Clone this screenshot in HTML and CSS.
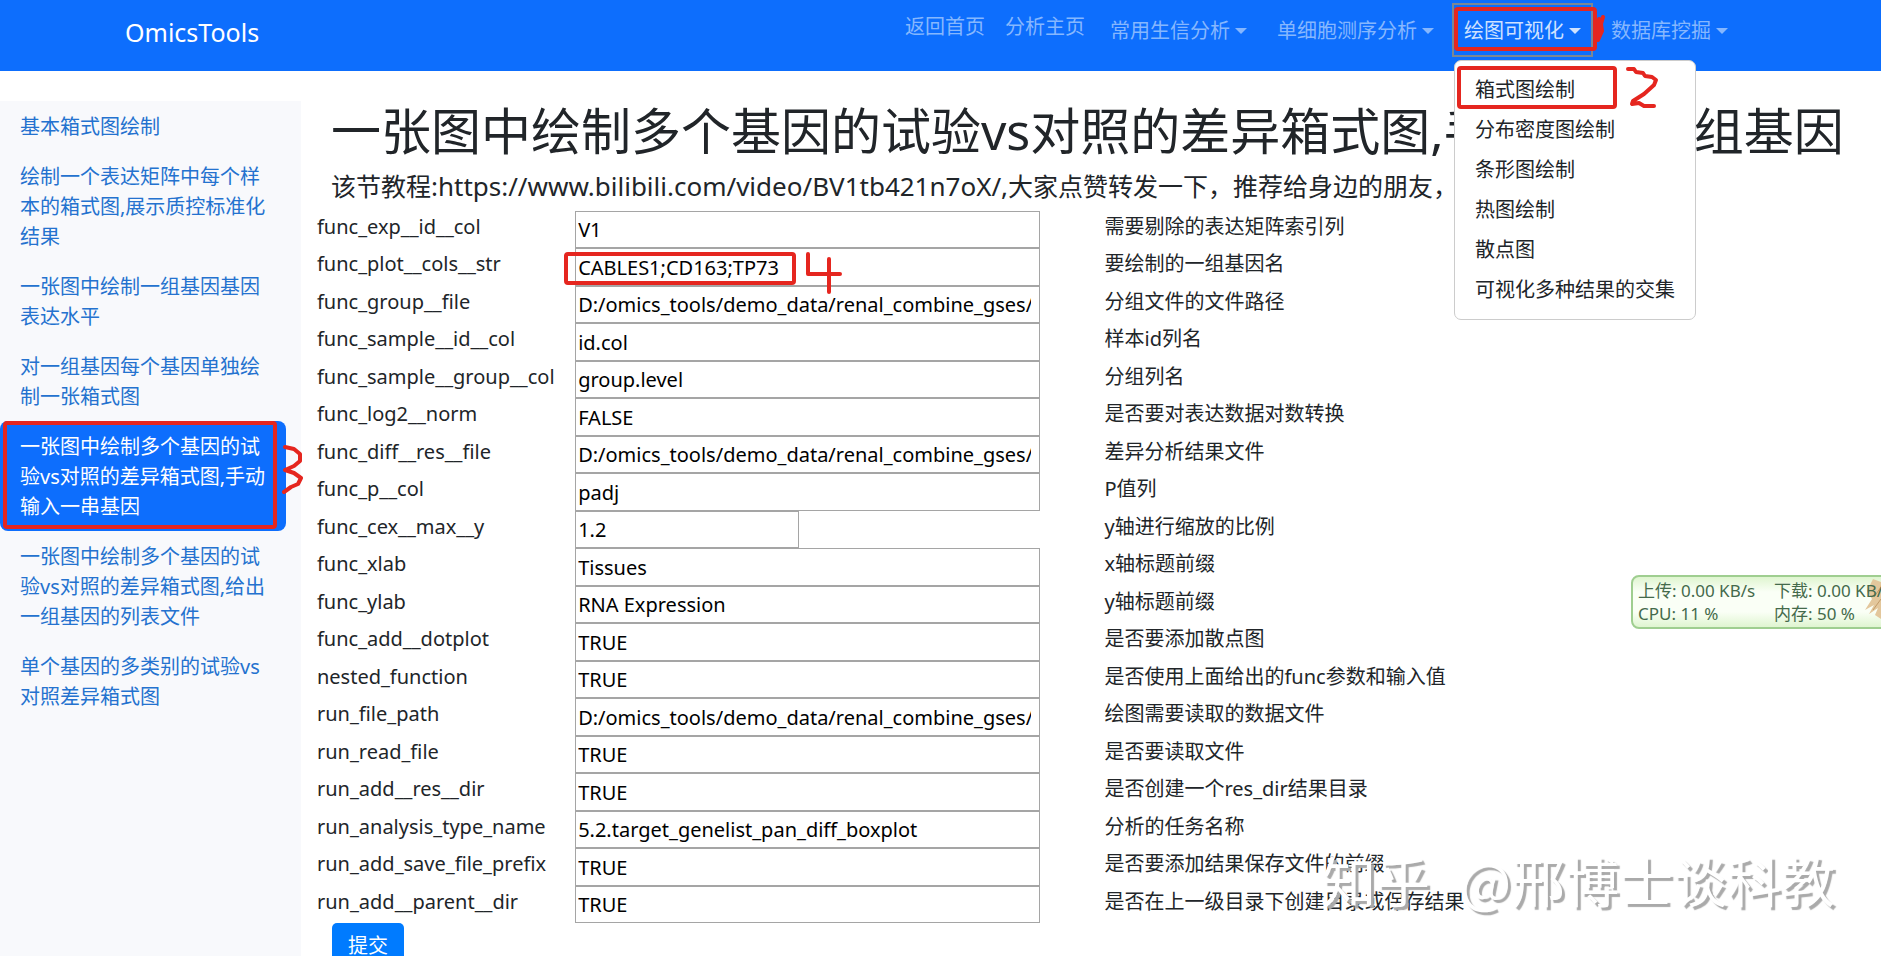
FILE: index.html
```html
<!DOCTYPE html>
<html lang="zh-CN">
<head>
    <meta charset="UTF-8">
    <meta name="viewport" content="width=device-width, initial-scale=1.0">
    <title>OmicsTools</title>
    <link rel="stylesheet" href="styles.css">
</head>
<body>

    <header class="topbar">
        <div class="topbar-inner">
            <a class="brand" href="#">OmicsTools</a>
            <nav class="topnav">
                <a class="nav-link" href="#">返回首页</a>
                <a class="nav-link" href="#">分析主页</a>
                <div class="dropdown"><button class="dropdown-toggle" type="button">常用生信分析</button></div>
                <div class="dropdown"><button class="dropdown-toggle" type="button">单细胞测序分析</button></div>
                <div class="dropdown">
                    <button class="dropdown-toggle open" type="button">绘图可视化</button>
                    <div class="mark mark-1"></div>
                    <svg class="digit digit-1" width="12" height="28" viewBox="0 0 12 28"><path d="M8 2 L6 9 L7 16 L3 25 L4 4"/></svg>
                    <div class="dropdown-menu">
                        <a href="#">箱式图绘制</a>
                        <a href="#">分布密度图绘制</a>
                        <a href="#">条形图绘制</a>
                        <a href="#">热图绘制</a>
                        <a href="#">散点图</a>
                        <a href="#">可视化多种结果的交集</a>
                        <div class="mark mark-2"></div>
                        <svg class="digit digit-2" width="34" height="44" viewBox="0 0 34 44"><path d="M3 4 L9 4 L11 7 L18 8 L20 11 L27 12 L31 15 L29 20 L19 29 L8 36 L7 39 L14 38 L19 41 L29 41"/></svg>
                    </div>
                </div>
                <div class="dropdown"><button class="dropdown-toggle" type="button">数据库挖掘</button></div>
            </nav>
        </div>
    </header>

    <div class="page">
        <aside class="sidebar">
            <a href="#">基本箱式图绘制</a>
            <a href="#">绘制一个表达矩阵中每个样本的箱式图,展示质控标准化结果</a>
            <a href="#">一张图中绘制一组基因基因表达水平</a>
            <a href="#">对一组基因每个基因单独绘制一张箱式图</a>
            <a class="active" href="#">一张图中绘制多个基因的试验vs对照的差异箱式图,手动输入一串基因
                <span class="mark mark-3"></span>
                <svg class="digit digit-3" width="24" height="52" viewBox="0 0 24 52"><path d="M3 3 L12 5 L18 10 L18 17 L12 22 L3 26 L12 29 L19 34 L16 40 L9 43 L2 48"/></svg>
            </a>
            <a href="#">一张图中绘制多个基因的试验vs对照的差异箱式图,给出一组基因的列表文件</a>
            <a href="#">单个基因的多类别的试验vs对照差异箱式图</a>
        </aside>

        <main class="content">
            <h1>一张图中绘制多个基因的试验vs对照的差异箱式图,手动输入一组基因</h1>
            <h5>该节教程<span class="url">:https://www.bilibili.com/video/BV1tb421n7oX/,</span>大家点赞转发一下，推荐给身边的朋友，谢谢</h5>

            <form class="params">
                <div class="row">
                    <label for="p1">func_exp__id__col</label>
                    <div class="field"><input id="p1" type="text" value="V1"></div>
                    <span class="desc">需要剔除的表达矩阵索引列</span>
                </div>
                <div class="row">
                    <label for="p2">func_plot__cols__str</label>
                    <div class="field">
                        <input id="p2" type="text" value="CABLES1;CD163;TP73">
                        <div class="mark mark-4"></div>
                        <svg class="digit digit-4" width="40" height="44" viewBox="0 0 40 44"><path d="M5 4 L5 24 L37 24 M26 9 L26 42"/></svg>
                    </div>
                    <span class="desc">要绘制的一组基因名</span>
                </div>
                <div class="row">
                    <label for="p3">func_group__file</label>
                    <div class="field"><input id="p3" type="text" value="D:/omics_tools/demo_data/renal_combine_gses/group.csv"></div>
                    <span class="desc">分组文件的文件路径</span>
                </div>
                <div class="row">
                    <label for="p4">func_sample__id__col</label>
                    <div class="field"><input id="p4" type="text" value="id.col"></div>
                    <span class="desc">样本id列名</span>
                </div>
                <div class="row">
                    <label for="p5">func_sample__group__col</label>
                    <div class="field"><input id="p5" type="text" value="group.level"></div>
                    <span class="desc">分组列名</span>
                </div>
                <div class="row">
                    <label for="p6">func_log2__norm</label>
                    <div class="field"><input id="p6" type="text" value="FALSE"></div>
                    <span class="desc">是否要对表达数据对数转换</span>
                </div>
                <div class="row">
                    <label for="p7">func_diff__res__file</label>
                    <div class="field"><input id="p7" type="text" value="D:/omics_tools/demo_data/renal_combine_gses/diff.csv"></div>
                    <span class="desc">差异分析结果文件</span>
                </div>
                <div class="row">
                    <label for="p8">func_p__col</label>
                    <div class="field"><input id="p8" type="text" value="padj"></div>
                    <span class="desc">P值列</span>
                </div>
                <div class="row">
                    <label for="p9">func_cex__max__y</label>
                    <div class="field"><input id="p9" class="short" type="number" step="0.1" value="1.2"></div>
                    <span class="desc">y轴进行缩放的比例</span>
                </div>
                <div class="row">
                    <label for="p10">func_xlab</label>
                    <div class="field"><input id="p10" type="text" value="Tissues"></div>
                    <span class="desc">x轴标题前缀</span>
                </div>
                <div class="row">
                    <label for="p11">func_ylab</label>
                    <div class="field"><input id="p11" type="text" value="RNA Expression"></div>
                    <span class="desc">y轴标题前缀</span>
                </div>
                <div class="row">
                    <label for="p12">func_add__dotplot</label>
                    <div class="field"><input id="p12" type="text" value="TRUE"></div>
                    <span class="desc">是否要添加散点图</span>
                </div>
                <div class="row">
                    <label for="p13">nested_function</label>
                    <div class="field"><input id="p13" type="text" value="TRUE"></div>
                    <span class="desc">是否使用上面给出的func参数和输入值</span>
                </div>
                <div class="row">
                    <label for="p14">run_file_path</label>
                    <div class="field"><input id="p14" type="text" value="D:/omics_tools/demo_data/renal_combine_gses/exp.csv"></div>
                    <span class="desc">绘图需要读取的数据文件</span>
                </div>
                <div class="row">
                    <label for="p15">run_read_file</label>
                    <div class="field"><input id="p15" type="text" value="TRUE"></div>
                    <span class="desc">是否要读取文件</span>
                </div>
                <div class="row">
                    <label for="p16">run_add__res__dir</label>
                    <div class="field"><input id="p16" type="text" value="TRUE"></div>
                    <span class="desc">是否创建一个res_dir结果目录</span>
                </div>
                <div class="row">
                    <label for="p17">run_analysis_type_name</label>
                    <div class="field"><input id="p17" type="text" value="5.2.target_genelist_pan_diff_boxplot"></div>
                    <span class="desc">分析的任务名称</span>
                </div>
                <div class="row">
                    <label for="p18">run_add_save_file_prefix</label>
                    <div class="field"><input id="p18" type="text" value="TRUE"></div>
                    <span class="desc">是否要添加结果保存文件的前缀</span>
                </div>
                <div class="row">
                    <label for="p19">run_add__parent__dir</label>
                    <div class="field"><input id="p19" type="text" value="TRUE"></div>
                    <span class="desc">是否在上一级目录下创建目录或保存结果</span>
                </div>
                <button class="submit-btn" type="submit">提交</button>
            </form>
        </main>
    </div>

    <!-- floating system monitor -->
    <div class="monitor">
        <svg class="monitor-hair" width="16" height="44" viewBox="0 0 16 44"><path d="M8 0 L16 3 V40 L10 36 L13 29 L4 35 L9 26 L0 31 L7 20 L2 12 Z" fill="#e3c79c"/><path d="M16 8 L9 18 M16 20 L8 31" stroke="#c19a68" fill="none"/></svg>
        <span>上传: 0.00 KB/s</span><span>下载: 0.00 KB/s</span>
        <span>CPU: 11 %</span><span>内存: 50 %</span>
    </div>

    <div class="watermark"><span>知乎</span><span>@邢博士谈科教</span></div>

</body>
</html>
```
FILE: styles.css
```css
* {
    margin: 0;
    padding: 0;
    box-sizing: border-box;
}

html {
    height: 100%;
}

body {
    position: relative;
    height: 100vh;
    overflow: hidden;
    display: flex;
    flex-direction: column;
    gap: 30px;
    font-family: "Noto Sans", "Noto Sans CJK SC", sans-serif;
    font-size: 20px;
    line-height: 30px;
    color: #212529;
    background: #fff;
}

a {
    text-decoration: none;
}

button, input {
    font: inherit;
}

/* top bar */
.topbar {
    flex: none;
    height: 71px;
    background: #0d6efd;
}

.topbar-inner {
    max-width: 1631px;
    margin: 0 auto;
    display: flex;
    justify-content: space-between;
}

.brand {
    padding-top: 17px;
    font-size: 25px;
    color: #fff;
}

.topnav {
    display: flex;
    align-items: flex-start;
    padding: 5px 18px 0 0;
}

.nav-link {
    padding: 7px 10px;
    color: #86b7fe;
}

.dropdown {
    position: relative;
    margin-left: 10px;
}

.nav-link + .dropdown {
    margin-left: 5px;
}

.dropdown-toggle {
    display: flex;
    align-items: center;
    gap: 5px;
    padding: 11px 10px 9px;
    border: none;
    background: none;
    color: #86b7fe;
    cursor: pointer;
}

.dropdown-toggle::after {
    content: "";
    border-top: 6px solid;
    border-left: 6px solid transparent;
    border-right: 6px solid transparent;
}

.dropdown-toggle.open {
    color: #cfe2ff;
    outline: 2px solid #7c8794;
}

.dropdown-menu {
    position: absolute;
    top: 55px;
    left: 0;
    z-index: 5;
    padding: 9px 0;
    border: 1px solid #ccc;
    border-radius: 7px;
    background: #fff;
}

.dropdown-menu a {
    display: block;
    padding: 5px 20px;
    white-space: nowrap;
    color: #212529;
}

/* layout */
.page {
    flex: 1;
    min-height: 0;
    display: flex;
}

.sidebar {
    flex: none;
    width: 16%;
    padding-right: 15px;
    background: #f8f9fc;
}

.sidebar a {
    position: relative;
    display: block;
    padding: 11px 20px 9px;
    color: #2472cf;
}

.sidebar a.active {
    border-radius: 8px;
    background: #0d6efd;
    color: #fff;
}

.content {
    flex: 1;
    min-width: 0;
    padding: 0 15px 0 16px;
}

.content h1, .content h5 {
    margin-bottom: 10px;
    padding-left: 14px;
    font-weight: 400;
    white-space: nowrap;
}

.content h1 {
    font-size: 50px;
    line-height: 60px;
}

.content h5 {
    height: 30px;
    font-size: 25px;
    line-height: 30px;
}

.url {
    font-size: 26px;
}

/* parameter form */
.row {
    display: grid;
    grid-template-columns: 2fr 4fr 6fr;
    height: 37px;
}

.row:nth-child(even) {
    height: 38px;
}

.row label, .desc {
    padding-top: 1px;
}

.field {
    position: relative;
}

.field input {
    display: block;
    width: 90%;
    height: 100%;
    padding: 0 8px 0 2px;
    border: 1px solid #a5a5a5;
    background: #fff;
    color: #000;
}

.field input.short {
    width: 224px;
    appearance: textfield;
}

.desc {
    padding-left: 13px;
}

.submit-btn {
    margin-left: 15px;
    padding: 8px 16px;
    border: none;
    border-radius: 5px;
    background: #007bff;
    color: #fff;
    cursor: pointer;
}

/* red step marks */
.mark {
    position: absolute;
    z-index: 6;
    border: 4px solid #e5261f;
    border-radius: 4px;
    pointer-events: none;
}

.mark-1 {
    top: 2px;
    left: 0;
    width: 143px;
    height: 44px;
}

.mark-2 {
    top: 5px;
    left: 2px;
    width: 160px;
    height: 43px;
}

.mark-3 {
    top: 0;
    left: 3px;
    width: 274px;
    height: 108px;
}

.mark-4 {
    top: 4px;
    left: -11px;
    width: 232px;
    height: 33px;
}

.digit {
    position: absolute;
    z-index: 6;
    fill: none;
    stroke: #e5261f;
    stroke-width: 4;
    stroke-linecap: round;
    stroke-linejoin: round;
}

.digit-1 {
    top: 10px;
    left: 141px;
}

.digit-2 {
    top: 4px;
    left: 170px;
}

.digit-3 {
    top: 23px;
    left: 282px;
}

.digit-4 {
    top: 2px;
    left: 228px;
}

/* system monitor */
.monitor {
    position: absolute;
    top: 575px;
    right: -12px;
    z-index: 7;
    display: grid;
    grid-template-columns: 136px 112px;
    padding: 2px 5px;
    border: 2px solid #9fce90;
    border-radius: 8px;
    background: linear-gradient(#dff5d0, #fafff6 30%, #fafff6 70%, #dff5d0);
    font-size: 17px;
    line-height: 23px;
    color: #446a4b;
    white-space: nowrap;
}

.monitor span {
    position: relative;
}

.monitor-hair {
    position: absolute;
    top: 2px;
    right: 10px;
}

.watermark {
    position: absolute;
    right: 46px;
    bottom: 44px;
    z-index: 7;
    display: flex;
    gap: 30px;
    font-family: "Noto Sans CJK SC", sans-serif;
    font-size: 54px;
    line-height: 64px;
    color: #fff;
    text-shadow: 3px 3px 1px #aaa;
    pointer-events: none;
}
```
